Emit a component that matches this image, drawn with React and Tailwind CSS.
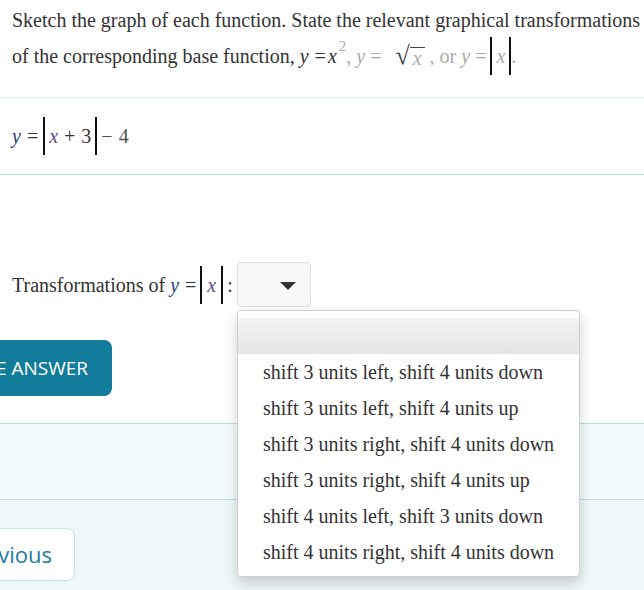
const options = [
  'shift 3 units left, shift 4 units down',
  'shift 3 units left, shift 4 units up',
  'shift 3 units right, shift 4 units down',
  'shift 3 units right, shift 4 units up',
  'shift 4 units left, shift 3 units down',
  'shift 4 units right, shift 4 units down',
];

function Abs({ children, className = '' }) {
  return (
    <span
      className={`inline-flex items-center border-x-2 border-[#111] px-[4px] h-[38px] ${className}`}
    >
      {children}
    </span>
  );
}

export default function App() {
  return (
    <div className="relative w-[644px] h-[590px] overflow-hidden bg-white font-['Liberation_Serif',serif] text-[#333]">
      {/* question prompt */}
      <div className="px-3 pt-[2px] pb-[23px] text-[20px] leading-[36px] whitespace-nowrap">
        <div>Sketch the graph of each function. State the relevant graphical transformations</div>
        <div className="flex items-center h-[36px]">
          <span>of the corresponding base function,&nbsp;</span>
          <span className="italic">y</span>
          <span className="ml-[6px]">=</span>
          <span className="italic ml-[2px]">x</span>
          <span className="text-[15px] text-[#aaa] self-start leading-none mt-[1px] ml-[2px]">2</span>
          <span className="text-[#aaa] flex items-center">
            <span>,&nbsp;</span>
            <span className="italic">y</span>
            <span className="ml-[5px]">=</span>
            <span className="ml-[14px] text-[26px] text-[#444] leading-none">√</span>
            <span className="italic border-t border-[#444] leading-[20px] px-[3px] mt-[3px]">x</span>
            <span>&nbsp;, or&nbsp;</span>
            <span className="italic">y</span>
            <span className="ml-[5px] mr-[4px]">=</span>
            <Abs className="italic">x</Abs>
            <span>.</span>
          </span>
        </div>
      </div>
      <div className="border-t border-[#dcf1f8]" />

      {/* equation */}
      <div className="px-3 text-[20px] h-[76px] flex items-center">
        <span className="italic text-[#2d3a7a]">y</span>
        <span className="ml-[6px] mr-[5px]">=</span>
        <Abs>
          <span className="italic text-[#5b4a8a]">x</span>
          <span className="mx-[6px]">+</span>3
        </Abs>
        <span className="ml-[4px] text-[#555]">−</span>
        <span className="ml-[6px] text-[#555]">4</span>
      </div>
      <div className="border-t border-[#b6e0ea]" />

      {/* answer row */}
      <div className="pt-[87px] pb-[27px]">
        <div className="flex items-center px-3 text-[20px] h-[45px]">
          <span>Transformations of&nbsp;</span>
          <span className="italic text-[#2d3a7a]">y</span>
          <span className="ml-[6px] mr-[4px]">=</span>
          <Abs>
            <span className="italic text-[#5b4a8a] px-[1px]">x</span>
          </Abs>
          <span className="ml-[4px]">:</span>
          <div className="ml-[4px] w-[74px] h-[45px] rounded-[4px] border border-[#dedede] bg-[#f8f8f8] flex items-center justify-end pr-[14px]">
            <span className="mt-[2px] w-0 h-0 border-x-[8px] border-x-transparent border-t-[8px] border-t-[#333]" />
          </div>
        </div>
        <div className="mt-[33px] -ml-[120px] w-[232px] h-[56px] rounded-[8px] bg-[#137c9b] text-white font-['Open_Sans',sans-serif] text-[19px] flex items-center justify-end pr-[24px]">
          SHOW THE ANSWER
        </div>
      </div>

      <div className="border-t border-[#b9dfe8] bg-[#f4fbfc] h-[76px]" />
      <div className="border-t border-[#b9dfe8] bg-[#eef8f8] h-[100px] pt-[28px]">
        <div className="-ml-[40px] w-[115px] h-[53px] rounded-[8px] border border-[#c4e4ec] bg-white text-[#1b7d9c] font-['Open_Sans',sans-serif] text-[22px] flex items-center justify-end pr-[22px]">
          Previous
        </div>
      </div>

      {/* open dropdown menu */}
      <div className="absolute left-[237px] top-[310px] w-[343px] h-[267px] rounded-[4px] border border-[#d0d0d0] bg-white shadow-[0_6px_14px_rgba(0,0,0,0.18)] pt-[7px]">
        <div className="h-[36px] bg-gradient-to-b from-[#f3f3f3] to-[#e5e5e5]" />
        {options.map((o) => (
          <div key={o} className="h-[36px] flex items-center px-[25px] text-[20px] text-[#333] whitespace-nowrap">
            {o}
          </div>
        ))}
      </div>
    </div>
  );
}
